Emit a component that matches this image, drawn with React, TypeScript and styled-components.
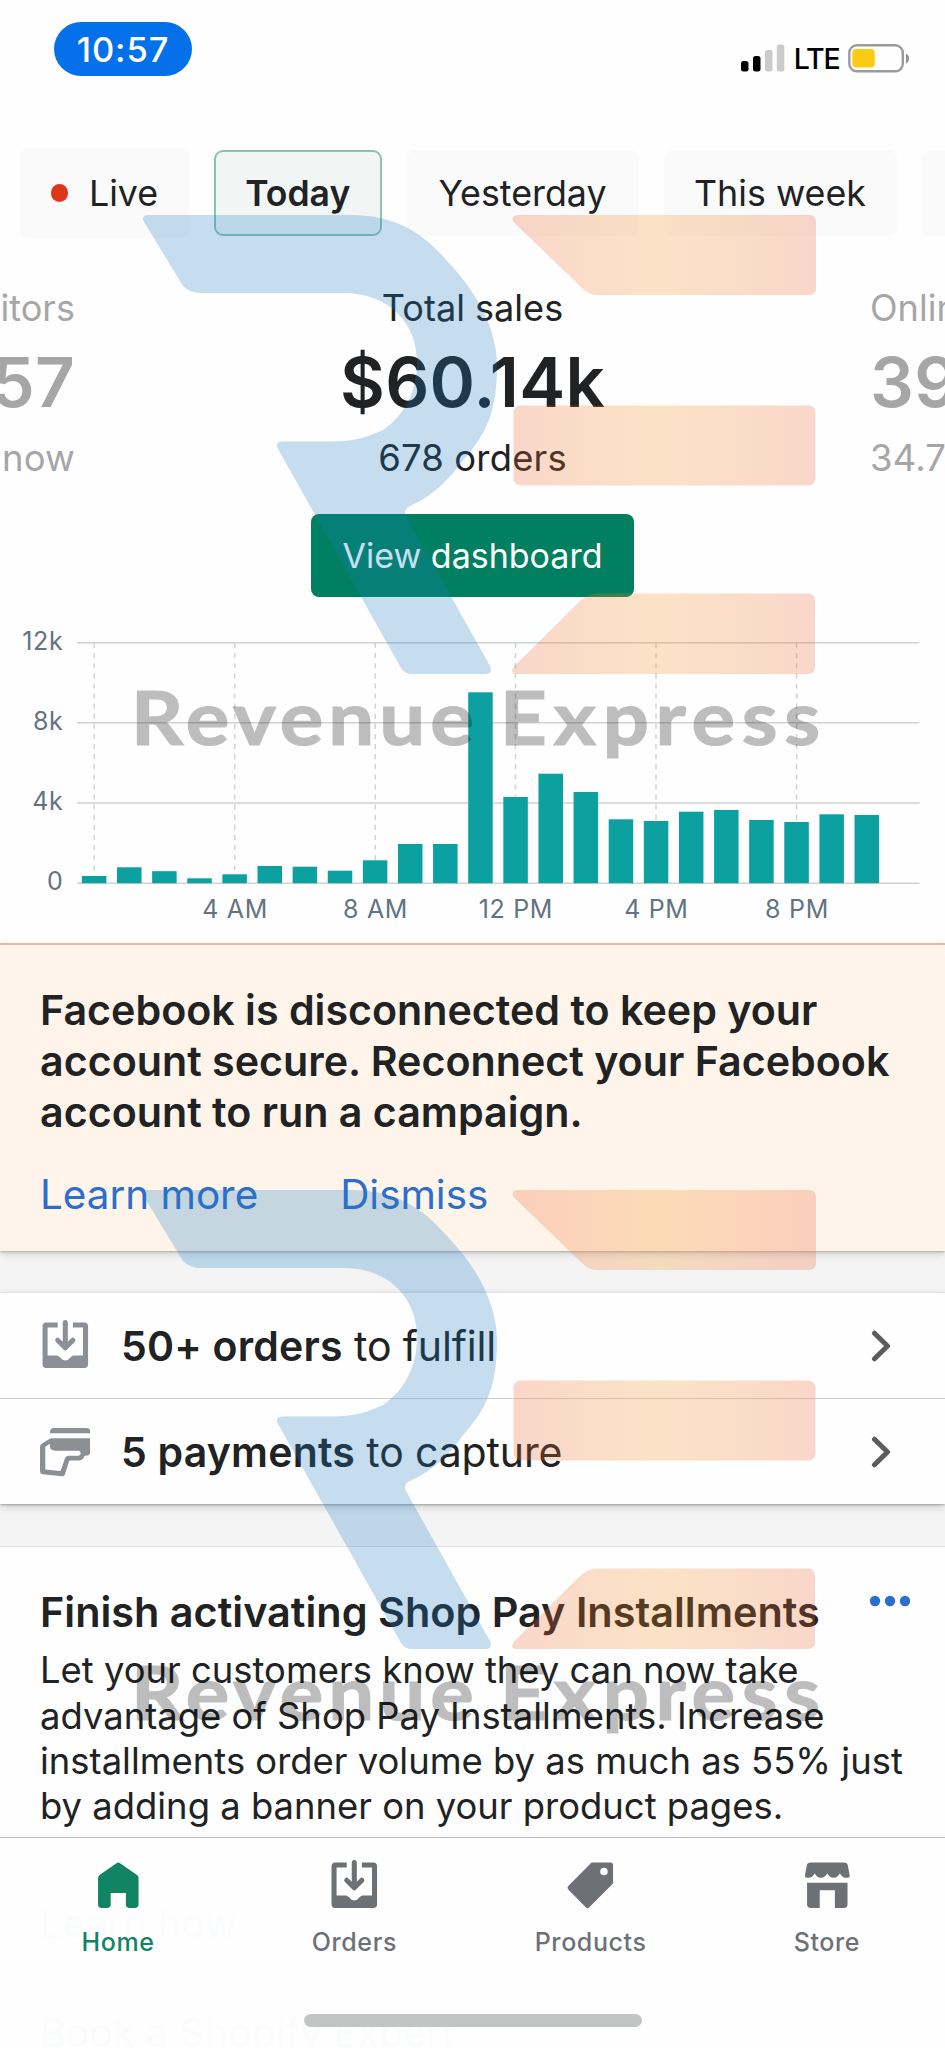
import React from 'react';
import styled, { createGlobalStyle } from 'styled-components';

const GlobalStyle = createGlobalStyle`
  *, *::before, *::after { box-sizing: border-box; }
  body { margin: 0; background: #fff; }
`;

const Screen = styled.main`
  position: relative;
  width: 945px;
  height: 2048px;
  overflow: hidden;
  background: #fefefe;
  color: #202223;
  font-family: Inter, 'Liberation Sans', sans-serif;
  white-space: nowrap;
`;

/* ---------- status bar ---------- */

const StatusBar = styled.header`
  display: flex;
  justify-content: space-between;
  align-items: flex-start;
  height: 148px;
  padding: 22px 36.5px 0 54px;
`;

const TimePill = styled.div`
  display: flex;
  align-items: center;
  justify-content: center;
  width: 138px;
  height: 54px;
  border-radius: 27px;
  background: #0470ea;
  color: #fff;
  font-size: 34.5px;
  font-weight: 500;
  letter-spacing: 0.9px;
`;

const StatusIcons = styled.div`
  display: flex;
  align-items: center;
  height: 30px;
  margin-top: 21px;
  color: #000;
`;

const Network = styled.span`
  margin: 1px 8px 0 9px;
  font-size: 28.6px;
  font-weight: 500;
  letter-spacing: -1.2px;
`;

/* ---------- period tabs ---------- */

const Periods = styled.nav`
  display: flex;
  align-items: center;
  gap: 25px;
  height: 90px;
  margin-bottom: 1px;
  padding-left: 20px;
`;

const Period = styled.div<{ $width: number; $active?: boolean; $tall?: boolean }>`
  display: flex;
  flex: none;
  align-items: center;
  justify-content: center;
  gap: 20.5px;
  width: ${(p) => p.$width}px;
  height: ${(p) => (p.$tall ? 90 : 86)}px;
  border-radius: 9px;
  border: ${(p) => (p.$active ? '2px solid #8dc1b2' : '0')};
  background: ${(p) => (p.$active ? '#f1f6f5' : '#fafafa')};
  font-size: ${(p) => (p.$active ? 35.5 : 35.8)}px;
  font-weight: ${(p) => (p.$active ? 600 : 400)};
`;

const LiveDot = styled.span`
  width: 17.5px;
  height: 17.5px;
  border-radius: 50%;
  background: #de3618;
`;

/* ---------- metrics ---------- */

const Metrics = styled.section`
  display: grid;
  grid-template-columns: 75px 795px 75px;
  padding-top: 45px;
`;

const Metric = styled.div<{ $align: string; $muted?: boolean }>`
  display: flex;
  flex-direction: column;
  align-items: ${(p) => p.$align};
  min-width: 0;
  color: ${(p) => (p.$muted ? '#a6a6a7' : '#202223')};
`;

const MetricLabel = styled.div`
  font-size: 36.1px;
  line-height: 48px;
`;

const MetricValue = styled.div`
  font-size: 69px;
  font-weight: 600;
  line-height: 100px;
  letter-spacing: 0.3px;
`;

const MetricNote = styled.div`
  font-size: 36.4px;
  line-height: 52px;
  letter-spacing: 0.2px;
`;

const DashboardButton = styled.button`
  display: block;
  width: 322.5px;
  height: 83px;
  margin: 30px auto 0;
  padding: 0;
  border: 0;
  border-radius: 8px;
  background: #008060;
  color: #fff;
  font: 400 34px Inter, 'Liberation Sans', sans-serif;
`;

/* ---------- chart ---------- */

const ChartSvg = styled.svg`
  display: block;
  width: 945px;
  height: 347px;
`;

const AxisText = styled.text`
  fill: #637381;
  font-size: 25px;
  letter-spacing: 0.7px;
`;

const BAR_TOPS = [
  876, 867.3, 871.2, 878.3, 874.3, 866, 866.7, 870.7, 860.3, 844, 844, 692.3,
  797, 773.7, 792, 819.3, 821, 811.7, 810, 820, 822, 814.3, 815,
];
const HOURS = [
  { x: 94.2, label: '' },
  { x: 234.7, label: '4 AM' },
  { x: 375.2, label: '8 AM' },
  { x: 515.5, label: '12 PM' },
  { x: 656, label: '4 PM' },
  { x: 796.6, label: '8 PM' },
];
const LEVELS = [
  { y: 642.8, label: '12k' },
  { y: 722.8, label: '8k' },
  { y: 803, label: '4k' },
  { y: 883.2, label: '0' },
];

function SalesChart() {
  return (
    <ChartSvg viewBox="0 597 945 347">
      {HOURS.map((h) => (
        <line key={h.x} x1={h.x} x2={h.x} y1={643} y2={883} stroke="#d3d4d5" strokeWidth="1.5" strokeDasharray="5.1 5" />
      ))}
      {LEVELS.map((l) => (
        <g key={l.label}>
          <line x1="77" x2="919.5" y1={l.y} y2={l.y} stroke="#cfd1d2" strokeWidth="1.6" />
          <AxisText x="63.5" y={l.y + 6.8} textAnchor="end">{l.label}</AxisText>
        </g>
      ))}
      {BAR_TOPS.map((top, i) => (
        <rect key={i} x={81.9 + 35.12 * i} y={top} width="24.5" height={883.2 - top} fill="#0ca0a0" />
      ))}
      {HOURS.map((h) => (
        <AxisText key={h.x} x={h.x + 0.4} y="917.8" textAnchor="middle">{h.label}</AxisText>
      ))}
    </ChartSvg>
  );
}

/* ---------- banner ---------- */

const Banner = styled.section`
  position: relative;
  height: 308px;
  margin-top: -1px;
  padding: 40px 40px 0;
  border-top: 2px solid #dcc29b;
  background: #fff4ea;
  box-shadow: 0 1px 2px rgba(0, 0, 0, 0.22), 0 3px 8px rgba(0, 0, 0, 0.14);
`;

const BannerText = styled.p`
  margin: 0;
  font-size: 41.2px;
  font-weight: 600;
  line-height: 51px;
  white-space: normal;
`;

const BannerLinks = styled.div`
  display: flex;
  gap: 82px;
  margin-top: 31px;
`;

const TextLink = styled.span`
  color: #2c6ecb;
  font-size: 40.4px;
  line-height: 52px;
`;

/* ---------- tasks ---------- */

const Backdrop = styled.div`
  padding: 41px 0 41.5px;
  background: #f4f4f5;
`;

const TaskList = styled.section`
  background: #fefefe;
  border-top: 1px solid #e4e5e7;
  box-shadow: 0 1px 2px rgba(0, 0, 0, 0.26), 0 3px 8px rgba(0, 0, 0, 0.16);
`;

const Task = styled.div`
  display: flex;
  align-items: center;
  height: 105.4px;
  padding: 0 54px 0 39.8px;
  font-size: 41px;

  & + & {
    height: 106px;
    border-top: 1px solid #d0d1d2;
  }
`;

const TaskLabel = styled.div`
  flex: 1;
  margin-left: 30.6px;
  letter-spacing: -0.15px;
`;

const Strong = styled.span`
  font-weight: 600;
  letter-spacing: 0.2px;
`;

function Chevron() {
  return (
    <svg width="20" height="32" viewBox="0 0 20 32" fill="none" stroke="#5c5c5d" strokeWidth="5" strokeLinecap="round" strokeLinejoin="round">
      <path d="M3.5 3.2 16.5 16 3.5 28.8" />
    </svg>
  );
}

/* ---------- promo card ---------- */

const Card = styled.section`
  height: 510px;
  padding: 40px 33px 0 40px;
  border-top: 1px solid #e1e2e4;
  background: #fefefe;
`;

const CardHead = styled.div`
  display: flex;
  justify-content: space-between;
  align-items: flex-start;
`;

const CardTitle = styled.h2`
  margin: 0;
  font-size: 41.4px;
  font-weight: 600;
  line-height: 50px;
`;

const MoreDots = styled.svg`
  width: 43px;
  height: 12px;
  margin-top: 8px;
`;

const CardBody = styled.p`
  margin: 11.5px 0 69px;
  font-size: 36.42px;
  line-height: 45.15px;
  white-space: normal;
`;

const CardLink = styled.div`
  height: 109px;
  color: #2c6ecb;
  font-size: 39.5px;
  line-height: 52px;
`;

/* ---------- bottom navigation ---------- */

const BottomBar = styled.footer`
  position: absolute;
  inset: auto 0 0 0;
  height: 211px;
  border-top: 1px solid #b9babb;
  background: rgba(254, 254, 254, 0.985);
`;

const NavItems = styled.nav`
  display: grid;
  grid-template-columns: repeat(4, 1fr);
  padding-top: 22px;
`;

const NavItem = styled.div<{ $active?: boolean }>`
  display: flex;
  flex-direction: column;
  align-items: center;
  gap: 16px;
  color: ${(p) => (p.$active ? '#108463' : '#6d7175')};
  font-size: 25px;
  font-weight: 500;
  line-height: 30px;
  letter-spacing: 0.6px;
`;

const HomeIndicator = styled.div`
  width: 338px;
  height: 13px;
  margin: 57px auto 0;
  border-radius: 7px;
  background: #c3c4c4;
`;

const Glyph = styled.svg`
  display: block;
  width: 50.6px;
  height: 50.6px;
  fill: currentColor;
`;

const GreyGlyph = styled(Glyph)`
  color: #8c9096;
`;

const OrdersPath = () => (
  <>
    <path d="M11 1a1 1 0 1 0-2 0v7.586l-1.293-1.293a1 1 0 0 0-1.414 1.414l3 3a1 1 0 0 0 1.414 0l3-3a1 1 0 0 0-1.414-1.414l-1.293 1.293v-7.586z" />
    <path d="M3 14v-11h4v-2h-4.5a1.5 1.5 0 0 0-1.5 1.5v15a1.5 1.5 0 0 0 1.5 1.5h15a1.5 1.5 0 0 0 1.5-1.5v-15a1.5 1.5 0 0 0-1.5-1.5h-4.5v2h4v11h-3.5c-.775 0-1.388.662-1.926 1.244l-.11.12c-.366.391-.886.636-1.464.636s-1.098-.245-1.463-.637l-.111-.119c-.538-.582-1.151-1.244-1.926-1.244h-3.5z" />
  </>
);

const HomePath = () => (
  <path d="M9.3 1.25a1.3 1.3 0 0 1 1.4 0l6.7 4.7a1.4 1.4 0 0 1 .6 1.15v10.4a1.5 1.5 0 0 1-1.5 1.5h-2a1.5 1.5 0 0 1-1.5-1.5v-4.5h-6v4.5a1.5 1.5 0 0 1-1.5 1.5h-2a1.5 1.5 0 0 1-1.5-1.5v-10.4a1.4 1.4 0 0 1 .6-1.15z" />
);

const TagPath = () => (
  <path
    fillRule="evenodd"
    d="M10.9 1h7.1a1 1 0 0 1 1 1v6.9a1 1 0 0 1-.3.7l-9.1 9.1a1 1 0 0 1-1.4 0l-6.9-7a1 1 0 0 1 0-1.4l8.9-9a1 1 0 0 1 .6-.3zM15.4 6.05a1.5 1.5 0 1 0 0-3 1.5 1.5 0 0 0 0 3z"
  />
);

const StorePath = () => (
  <>
    <path d="M3.4 1h13.2c.8 0 1.3.4 1.5 1.1l.75 4a.8.8 0 0 1-.8.9h-.6c-1.2 0-2-.9-2.45-1.8c-.5.9-1.3 1.8-2.5 1.8s-2-.9-2.5-1.8c-.5.9-1.3 1.8-2.5 1.8s-2-.9-2.5-1.8c-.45.9-1.25 1.8-2.45 1.8h-.6a.8.8 0 0 1-.8-.9l.75-4c.2-.7.7-1.1 1.5-1.1z" />
    <path d="M2 9h16v8.5a1.5 1.5 0 0 1-1.5 1.5h-3.5v-7h-6v7h-3.5a1.5 1.5 0 0 1-1.5-1.5z" />
  </>
);

/* ---------- watermark ---------- */

const WatermarkSvg = styled.svg<{ $top: number }>`
  position: absolute;
  left: 0;
  top: ${(p) => p.$top}px;
  width: 945px;
  height: 560px;
  pointer-events: none;
`;

const WatermarkText = styled.text`
  fill: #000;
  stroke: #000;
  stroke-width: 1.2px;
  opacity: 0.25;
  font-family: Lato, 'Liberation Sans', sans-serif;
  font-size: 74px;
  font-weight: 700;
`;

function Watermark({ top, id }: { top: number; id: string }) {
  return (
    <WatermarkSvg $top={top} viewBox="0 200 945 560">
      <defs>
        <linearGradient id={id} gradientUnits="userSpaceOnUse" x1="512" x2="816" y1="0" y2="0">
          <stop offset="0" stopColor="#ec6030" />
          <stop offset="0.48" stopColor="#f4901e" />
          <stop offset="1" stopColor="#ec6030" />
        </linearGradient>
      </defs>
      <path
        fill="#1c7cc4"
        fillOpacity="0.25"
        d="M149 215H350C395 215 422 232 447 261C473 288 497 325 497 366C497 415 484 436 464 459C447 482 432 496 410 506Q403 509 406 516L490 666Q493 674 485 674H412Q405 674 401 668L277.500 448Q275 441.500 283 441.500H333C353 441.500 368 437 383 430C404 416 417 392 417 362C417 324 390 293 343 293H200Q190 293 183 286L143.500 221Q141 215 149 215Z"
      />
      <g fill={`url(#${id})`} fillOpacity="0.25">
        <path d="M519 215H809Q816 215 816 222V288Q816 295 809 295H597Q589 295 583 289L513.500 222Q510 215 519 215Z" />
        <rect x="513.500" y="405.500" width="302" height="80" rx="7" />
        <path d="M598 593.500H808Q815 593.500 815 600.500V667Q815 674 808 674H518Q509 674 514 666.500L579 602Q587 593.500 598 593.500Z" />
      </g>
      <WatermarkText transform="translate(131 745) scale(1.1 1)" letterSpacing="4.600">Revenue</WatermarkText>
      <WatermarkText transform="translate(500 745) scale(1.1 1)" letterSpacing="6.100">Express</WatermarkText>
    </WatermarkSvg>
  );
}

export default function App() {
  return (
    <Screen>
      <GlobalStyle />
      <StatusBar>
        <TimePill>10:57</TimePill>
        <StatusIcons>
          <svg width="44" height="28" viewBox="0 0 44 28">
            <rect x="0" y="17" width="7.500" height="10.500" rx="2.500" />
            <rect x="12" y="12" width="7.500" height="15.500" rx="2.500" />
            <rect x="24" y="6" width="7.500" height="21.500" rx="2.500" fill="#cbcbcc" />
            <rect x="35.800" y="0.500" width="7.500" height="27" rx="2.500" fill="#cbcbcc" />
          </svg>
          <Network>LTE</Network>
          <svg width="61" height="29" viewBox="0 0 61 29">
            <rect x="1.300" y="1.300" width="53.500" height="26" rx="7.500" fill="none" stroke="#9c9c9d" strokeWidth="2.400" />
            <rect x="4.300" y="5" width="22.500" height="18.600" rx="4" fill="#fbcb14" />
            <path d="M58 9.500q3 1.600 3 5t-3 5z" fill="#8e8e8f" />
          </svg>
        </StatusIcons>
      </StatusBar>

      <Periods>
        <Period $width={169} $tall>
          <LiveDot />
          Live
        </Period>
        <Period $width={167.5} $active>Today</Period>
        <Period $width={232}>Yesterday</Period>
        <Period $width={233}>This week</Period>
        <Period $width={240} />
      </Periods>

      <Metrics>
        <Metric $align="flex-end" $muted>
          <MetricLabel>Visitors</MetricLabel>
          <MetricValue>57</MetricValue>
          <MetricNote>right now</MetricNote>
        </Metric>
        <Metric $align="center">
          <MetricLabel>Total sales</MetricLabel>
          <MetricValue>$60.14k</MetricValue>
          <MetricNote>678 orders</MetricNote>
        </Metric>
        <Metric $align="flex-start" $muted>
          <MetricLabel>Online store</MetricLabel>
          <MetricValue>39</MetricValue>
          <MetricNote>34.7</MetricNote>
        </Metric>
      </Metrics>
      <DashboardButton>View dashboard</DashboardButton>

      <SalesChart />

      <Banner>
        <BannerText>
          Facebook is disconnected to keep your account secure. Reconnect your Facebook account to run a campaign.
        </BannerText>
        <BannerLinks>
          <TextLink>Learn more</TextLink>
          <TextLink>Dismiss</TextLink>
        </BannerLinks>
      </Banner>

      <Backdrop>
        <TaskList>
          <Task>
            <GreyGlyph viewBox="0 0 20 20"><OrdersPath /></GreyGlyph>
            <TaskLabel><Strong>50+ orders</Strong> to fulfill</TaskLabel>
            <Chevron />
          </Task>
          <Task>
            <GreyGlyph viewBox="0 0 152 152">
              <path d="M30 19V16Q30 3 43 3H139Q152 3 152 16V19Z" />
              <path
                fillRule="evenodd"
                d="M34 34H152V72Q152 86 138 86H134Q129 101 113 101H88L75 143Q73 149 67 148L7 142Q0 141 0 134V59Q0 53 5 50L28 36Q31 34 34 34ZM30 50L16 59V128L62 132L75 94Q77 86 86 86H114Q122 86 122 79Q122 71 114 71H46Q30 71 30 58Z"
              />
            </GreyGlyph>
            <TaskLabel><Strong>5 payments</Strong> to capture</TaskLabel>
            <Chevron />
          </Task>
        </TaskList>
      </Backdrop>

      <Card>
        <CardHead>
          <CardTitle>Finish activating Shop Pay Installments</CardTitle>
          <MoreDots viewBox="0 0 43 12" fill="#2c6ecb">
            <circle cx="6" cy="6" r="5.200" />
            <circle cx="21" cy="6" r="5.200" />
            <circle cx="36" cy="6" r="5.200" />
          </MoreDots>
        </CardHead>
        <CardBody>
          Let your customers know they can now take advantage of Shop Pay Installments. Increase installments order
          volume by as much as 55% just by adding a banner on your product pages.
        </CardBody>
        <CardLink>Learn how</CardLink>
        <CardLink>Book a Shopify Expert</CardLink>
      </Card>

      <BottomBar>
        <NavItems>
          <NavItem $active>
            <Glyph viewBox="0 0 20 20"><HomePath /></Glyph>
            Home
          </NavItem>
          <NavItem>
            <Glyph viewBox="0 0 20 20"><OrdersPath /></Glyph>
            Orders
          </NavItem>
          <NavItem>
            <Glyph viewBox="0 0 20 20"><TagPath /></Glyph>
            Products
          </NavItem>
          <NavItem>
            <Glyph viewBox="0 0 20 20"><StorePath /></Glyph>
            Store
          </NavItem>
        </NavItems>
        <HomeIndicator />
      </BottomBar>

      <Watermark top={200} id="bars-upper" />
      <Watermark top={1175} id="bars-lower" />
    </Screen>
  );
}
